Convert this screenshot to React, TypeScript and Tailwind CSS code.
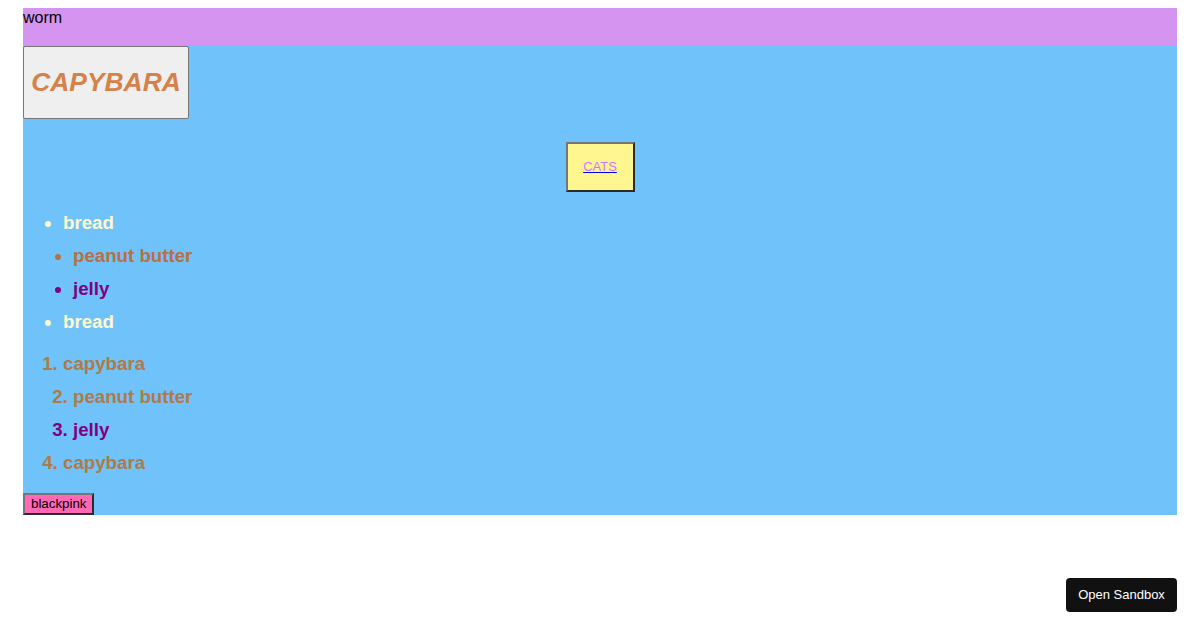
export default function App() {
  return (
    <div className="min-h-[630px] bg-white font-['Liberation_Sans',Arial,sans-serif]">
      <div className="mx-[23px] pt-2">
        <div className="h-[37px] bg-[#d494ef] text-[16px] leading-[19px] text-black">worm</div>
        <div className="flex flex-col items-start bg-[#70c2fa] pb-0">
          <button className="mt-px h-[73px] w-[166px] rounded-[2px] border border-[#767676] bg-[#efefef] text-[26.4px] font-bold italic text-[#d4824a]">
            CAPYBARA
          </button>
          <div className="mt-[23px] flex w-full justify-center">
            <div className="flex h-[50px] w-[69px] items-center justify-center border-2 border-t-[#767676] border-l-[#767676] border-r-[#2b2b2b] border-b-[#2b2b2b] bg-[#fff68f]">
              <a href="#" className="text-[13px] text-[#cc77ff] underline decoration-[#0000ee]">CATS</a>
            </div>
          </div>
          <ul className="mt-[14px] list-disc pl-[40px] text-[18.7px] font-bold leading-[33px]">
            <li className="text-[#fffacd] marker:text-[#fffacd]">bread</li>
            <li className="list-none">
              <ul className="list-disc pl-[10px]">
                <li className="text-[#b87040]">peanut butter</li>
                <li className="text-[#800080]">jelly</li>
              </ul>
            </li>
            <li className="text-[#fffacd]">bread</li>
          </ul>
          <ol className="mt-[9px] list-decimal pl-[40px] text-[18.7px] font-bold leading-[33px] text-[#b07a45]">
            <li>capybara</li>
            <li className="list-none">
              <ol className="list-decimal pl-[10px]" start={2}>
                <li className="text-[#b07a45]">peanut butter</li>
                <li className="text-[#800080]">jelly</li>
              </ol>
            </li>
            <li value={4}>capybara</li>
          </ol>
          <button className="mt-[14px] h-[22px] border-2 border-t-[#767676] border-l-[#767676] border-r-[#2b2b2b] border-b-[#2b2b2b] bg-[#ff69b4] px-[6px] text-[13.3px] leading-[16px] text-black">
            blackpink
          </button>
        </div>
      </div>
      <button className="fixed bottom-[18px] right-[23px] h-[34px] w-[111px] rounded-[4px] bg-[#111111] text-[13px] text-white">
        Open Sandbox
      </button>
    </div>
  );
}
